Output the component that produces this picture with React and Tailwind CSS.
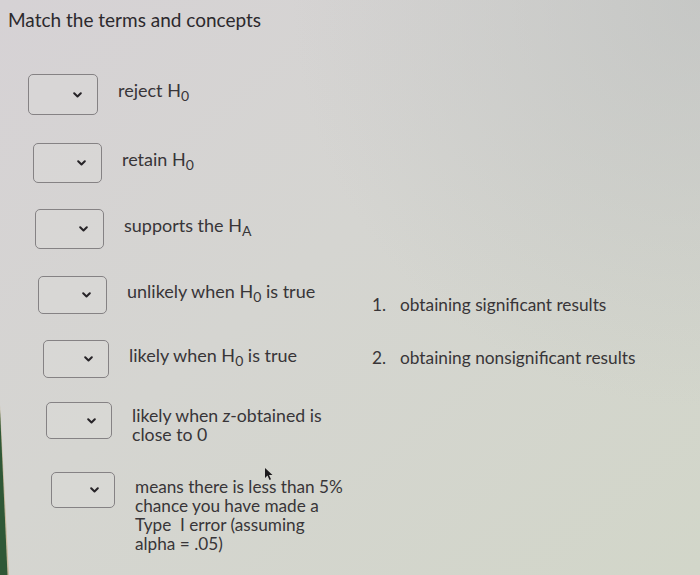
import React from "react";

// each term row: box offset, gap above, box size, and text nudge
const terms = [
  { id: 1, row: "ml-[28px] mt-[42px]", box: "w-[70px] h-[41px]", text: "pt-[7px] text-[18px]", label: <>reject H<Sub>0</Sub></> },
  { id: 2, row: "ml-[33px] mt-[28px]", box: "w-[69px] h-[40px]", text: "pt-[7px] text-[18px]", label: <>retain H<Sub>0</Sub></> },
  { id: 3, row: "ml-[35px] mt-[26px]", box: "w-[69px] h-[40px]", text: "pt-[7px] text-[18px]", label: <>supports the H<Sub>A</Sub></> },
  { id: 4, row: "ml-[38px] mt-[27px]", box: "w-[69px] h-[38px]", text: "pt-[6px] text-[18px]", label: <>unlikely when H<Sub>0</Sub> is true</> },
  { id: 5, row: "ml-[43px] mt-[26px]", box: "w-[66px] h-[38px]", text: "pt-[6px] text-[18px]", label: <>likely when H<Sub>0</Sub> is true</> },
  { id: 6, row: "ml-[46px] mt-[24px]", box: "w-[66px] h-[37px]", text: "pt-[4px] text-[17.7px]", label: <>likely when <i>z</i>-obtained is close to 0</> },
  {
    id: 7,
    row: "ml-[51px] mt-[28px]",
    box: "w-[64px] h-[36px]",
    text: "pt-[5px] text-[17.2px]",
    label: <>means there is less than 5% chance you have made a Type&nbsp; I error (assuming alpha = .05)</>,
  },
];

function Sub({ children }) {
  return <span className="relative top-[4px] text-[14px] leading-none">{children}</span>;
}

function Chevron() {
  return (
    <svg width="9" height="6" viewBox="0 0 9 6" fill="none">
      <polyline points="1.2,1.2 4.5,4.5 7.8,1.2" stroke="#262327" strokeWidth="2" strokeLinecap="round" strokeLinejoin="round" />
    </svg>
  );
}

function TermRow({ t }) {
  return (
    <div className={`flex items-start gap-[20px] ${t.row}`}>
      <div
        className={`shrink-0 flex items-center justify-end pr-[15px] rounded-[5px] border-[1.5px] border-[#858284] bg-[#dcdcd9]/40 ${t.box}`}
      >
        <Chevron />
      </div>
      <div className={`w-[214px] leading-[19px] text-[#383538] ${t.text}`}>{t.label}</div>
    </div>
  );
}

export default function App() {
  return (
    <div
      className="relative w-[700px] h-[575px] overflow-hidden bg-[linear-gradient(to_bottom_right,#d6d2d5,#d5d5d1_45%,#d2d6c9)]"
      style={{ fontFamily: "Lato, 'Open Sans', sans-serif" }}
    >
      <div className="absolute inset-0 bg-[radial-gradient(circle_at_100%_0%,rgba(188,190,190,0.6),transparent_45%)]" />

      <div className="relative">
        <h1 className="pl-[8px] pt-[8px] text-[19px] leading-[24px] text-[#2c292d]">Match the terms and concepts</h1>

        <div className="flex">
          <div className="w-[372px] shrink-0">
            {terms.map((t) => (
              <TermRow key={t.id} t={t} />
            ))}
          </div>

          <ol className="pt-[263px] text-[17.3px] leading-[19px] text-[#383538]">
            <li className="flex">
              <span className="w-[28px]">1.</span>obtaining significant results
            </li>
            <li className="flex mt-[34px]">
              <span className="w-[28px]">2.</span>obtaining nonsignificant results
            </li>
          </ol>
        </div>
      </div>

      {/* mouse pointer */}
      <svg className="absolute left-[264px] top-[467px]" width="10" height="14" viewBox="0 0 10 14">
        <path d="M1 1 L1 11 L3.5 8.5 L5.5 13 L7 12.3 L5 8 L8.5 8 Z" fill="#1c1a1c" />
      </svg>

      {/* monitor bezel creeping in at the bottom left */}
      <svg className="absolute left-0 top-0" width="12" height="575" viewBox="0 0 12 575">
        <polygon points="0,405 9,575 0,575" fill="#c7b89c" />
        <polygon points="0,410 7.5,575 0,575" fill="#2f5836" />
      </svg>
    </div>
  );
}
